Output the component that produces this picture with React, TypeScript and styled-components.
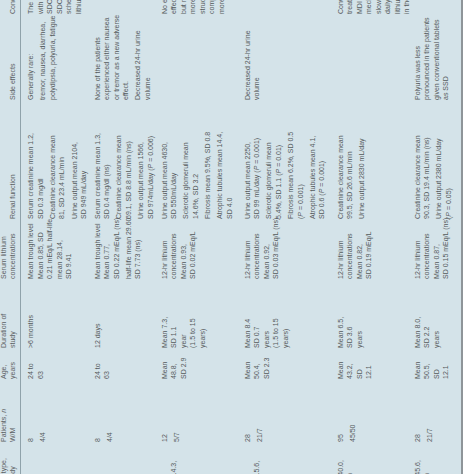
import React from 'react';
import styled, { createGlobalStyle } from 'styled-components';

/* The sheet is laid out at 4x and scaled down, so small text keeps exact widths. */
const S = 4;
const px = (n: number) => `${n * S}px`;

const Global = createGlobalStyle`
  html, body { margin: 0; padding: 0; background: #ffffff; }
  #root { width: 474px; height: 474px; }
`;

const Viewport = styled.div`
  width: 474px;
  height: 474px;
  overflow: hidden;
  background: #ffffff;
`;

/* The printed table is photographed turned a quarter turn; the sheet is laid out
   upright and rotated as a whole. */
const Sheet = styled.div`
  width: ${px(596)};
  height: ${px(465)};
  background: #d4e3e9;
  border-bottom: ${px(2)} solid #8e9599;
  transform-origin: 0 0;
  transform: translate(-4px, 523px) rotate(-90deg) scale(${1 / S});
  font-family: "Liberation Sans", Arial, sans-serif;
  font-size: ${px(7)};
  line-height: ${px(9.5)};
  color: #555a5c;
`;

const Grid = styled.div`
  display: grid;
  grid-template-columns: ${[78, 63, 31, 69, 60, 119, 86, 90].map(px).join(' ')};
  grid-template-rows: ${[25, 66.4, 67, 83, 93, 77, 53.6].map(px).join(' ')};
`;

const HeadCell = styled.div`
  box-sizing: border-box;
  display: flex;
  flex-direction: column;
  justify-content: flex-end;
  padding: 0 ${px(3)} ${px(2.6)};
  border-bottom: ${px(1)} solid #8fa2aa;
  white-space: nowrap;
  color: #5c6163;
`;

const Cell = styled.div`
  box-sizing: border-box;
  padding: ${px(5)} ${px(3)} 0;
  white-space: nowrap;
`;

const Para = styled.div`
  margin: 0;
  & + & {
    margin-top: ${px(2.8)};
  }
`;

const Line = styled.span`
  display: block;
`;

type Lines = React.ReactNode[];
type CellData = Lines[];

const P = () => <i>P</i>;

const header: Lines[] = [
  ['Author, design type,', 'and year of study'],
  [<>Patients, <i>n</i></>, 'W/M'],
  ['Age,', 'years'],
  ['Duration of', 'study'],
  ['Serum lithium', 'concentrations'],
  ['Renal function'],
  ['Side effects'],
  ['Conclusion'],
];

const rows: CellData[][] = [
  [
    [['Open study,', 'crossover']],
    [['8'], ['4/4']],
    [['24 to', '63']],
    [['>6 months']],
    [['Mean trough level', 'Mean 0.85, SD', '0.21 mEq/L half-life', 'mean 28.14,', 'SD 9.41']],
    [
      ['Serum creatinine mean 1.2,', 'SD 0.3 mg/dl'],
      ['Creatinine clearance mean', '81, SD 23.4 mL/min'],
      ['Urine output mean 2104,', 'SD 949 mL/day'],
    ],
    [['Generally rare:'], ['tremor, nausea, diarrhea,', 'polydipsia, polyuria, fatigue']],
    [[
      'The pharmacokinetic profile',
      'with once-daily dosing of',
      'SDC tablets was similar to',
      'SDC given twice daily; the',
      'schedule did not change',
      'lithium side effects',
    ]],
  ],
  [
    [['Open study,', 'crossover']],
    [['8'], ['4/4']],
    [['24 to', '63']],
    [['12 days']],
    [
      ['Mean trough level', 'Mean 0.77,', 'SD 0.22 mEq/L (ns)'],
      ['half-life mean 29.60', 'SD 7.73 (ns)'],
    ],
    [
      ['Serum creatinine mean 1.3,', 'SD 0.4 mg/dl (ns)'],
      ['Creatinine clearance mean', '69.1, SD 8.8 mL/min (ns)'],
      ['Urine output mean 1566,', <>SD 974mL/day (<P /> = 0.006)</>],
    ],
    [
      ['None of the patients', 'experienced either nausea', 'or tremor as a new adverse', 'effect.'],
      ['Decreased 24-hr urine', 'volume'],
    ],
    [],
  ],
  [
    [['Biopsy study,', 'lithium, mean 14.3,']],
    [['12'], ['5/7']],
    [['Mean', '48.8,', 'SD 2.9']],
    [['Mean 7.3,', 'SD 1.1', 'year', '(1.5 to 15', 'years)']],
    [['12-hr lithium', 'concentrations', 'Mean 0.93,', 'SD 0.02 mEq/L']],
    [
      ['Urine output mean 4630,', 'SD 550mL/day'],
      ['Sclerotic glomeruli mean', '14.6%, SD 3.2'],
      ['Fibrosis mean 9.5%, SD 0.8'],
      ['Atrophic tubules mean 14.4,', 'SD 4.0'],
    ],
    [],
    [[
      'No evidence of adverse renal',
      'effects of long-term lithium,',
      'but more tubular and',
      'more interstitial',
      'structural damage',
      'compared with controls',
      'more often with dosing',
    ]],
  ],
  [
    [['Biopsy study,', 'lithium, mean 15.6,']],
    [['28'], ['21/7']],
    [['Mean', '50.4,', 'SD 2.3']],
    [['Mean 8.4', 'SD 0.7', 'years', '(1.5 to 15', 'years)']],
    [['12-hr lithium', 'concentrations', 'Mean 0.92,', 'SD 0.03 mEq/L (ns)']],
    [
      ['Urine output mean 2250,', <>SD 99 mL/day (<P /> = 0.001)</>],
      ['Sclerotic glomeruli mean', <>5.4%, SD 1.1 (<P /> = 0.01)</>],
      ['Fibrosis mean 6.2%, SD 0.5', <>(<P /> = 0.001)</>],
      ['Atrophic tubules mean 4.1,', <>SD 0.6 (<P /> = 0.001)</>],
    ],
    [['Decreased 24-hr urine', 'volume']],
    [],
  ],
  [
    [['Cohort, mean 40.0,', 'years of lithium']],
    [['95'], ['45/50']],
    [['Mean', '43.2,', 'SD', '12.1']],
    [['Mean 6.5,', 'SD 3.6', 'years']],
    [['12-hr lithium', 'concentrations', 'Mean 0.82,', 'SD 0.19 mEq/L']],
    [
      ['Creatinine clearance mean', '99.5, SD 26.6 mL/min'],
      ['Urine output 2830 mL/day'],
    ],
    [],
    [[
      'Conventional lithium',
      'treatment given as',
      'MDI showed no',
      'mechanism for a',
      'slower decline than',
      'daily single-dose',
      'lithium regimens',
      'in the long term',
    ]],
  ],
  [
    [['Cohort, mean 45.6,', 'years of lithium']],
    [['28'], ['21/7']],
    [['Mean', '50.5,', 'SD', '12.1']],
    [['Mean 8.0,', 'SD 2.2', 'years']],
    [['12-hr lithium', 'concentrations', 'Mean 0.87,', 'SD 0.15 mEq/L (ns)']],
    [
      ['Creatinine clearance mean', '90.3, SD 19.4 mL/min (ns)'],
      ['Urine output 2380 mL/day', <>(<P /> = 0.05)</>],
    ],
    [['Polyuria was less', 'pronounced in the patients', 'given conventional tablets', 'as SSD']],
    [],
  ],
];

const renderLines = (lines: Lines) =>
  lines.map((l, i) => <Line key={i}>{l}</Line>);

export default function App() {
  return (
    <>
      <Global />
      <Viewport>
        <Sheet>
          <Grid>
            {header.map((h, i) => (
              <HeadCell key={`h${i}`}>{renderLines(h)}</HeadCell>
            ))}
            {rows.map((row, r) =>
              row.map((cell, c) => (
                <Cell key={`c${r}-${c}`}>
                  {cell.map((para, p) => (
                    <Para key={p}>{renderLines(para)}</Para>
                  ))}
                </Cell>
              ))
            )}
          </Grid>
        </Sheet>
      </Viewport>
    </>
  );
}
